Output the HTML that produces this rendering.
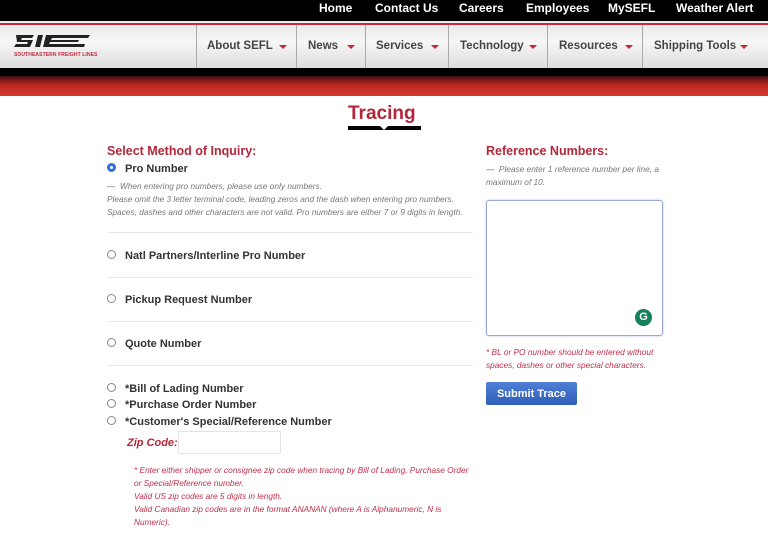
<!DOCTYPE html>
<html><head><meta charset="utf-8"><style>
*{margin:0;padding:0;box-sizing:border-box}
body{width:768px;height:543px;overflow:hidden;background:#fff;font-family:"Liberation Sans",Arial,sans-serif;position:relative}
.a{position:absolute;white-space:nowrap}
.top{left:0;top:0;width:768px;height:21px;background:#000}
.top span{position:absolute;top:1px;color:#fff;font-weight:bold;font-size:12px}
.nav{left:0;top:25px;width:768px;height:43px;background:linear-gradient(#e9e9e9,#f7f7f7 40%,#dcdcdc)}
.nav span{position:absolute;top:15px;font-size:11.5px;font-weight:bold;color:#444}
.nav i{position:absolute;top:20px;width:0;height:0;border-left:4px solid transparent;border-right:4px solid transparent;border-top:4px solid #c4283a}
.sep{position:absolute;top:0;width:1px;height:43px;background:#aaa}
.h{color:#b5263a;font-weight:bold;font-size:12.5px}
.lbl{color:#333;font-weight:bold;font-size:11px}
.n{color:#777;font-style:italic;font-size:8.3px}
.r{color:#c0304a;font-style:italic;font-size:8.3px}
.rad{position:absolute;width:9px;height:9px;border:1px solid #888;border-radius:50%;background:#fff}
.hr{position:absolute;left:107px;width:366px;height:1px;background:#e8e8e8}
</style></head><body>
<div class="a top">
<span style="left:319px">Home</span><span style="left:375px">Contact Us</span><span style="left:459px">Careers</span><span style="left:526px">Employees</span><span style="left:608px">MySEFL</span><span style="left:676px">Weather Alert</span>
</div>
<div class="a" style="left:0;top:21px;width:768px;height:2px;background:#eee"></div>
<div class="a" style="left:0;top:23px;width:768px;height:2px;background:#c4283a"></div>
<div class="a nav">
<svg style="position:absolute;left:14px;top:8px" width="78" height="16" viewBox="0 0 78 16"><path d="M2 2h18l-2 3H8l-1 2h12l-3 7H0l2-3h11l1-2H3z" fill="#222"/><path d="M24 2h5l-3 12h-5z" fill="#222"/><path d="M32 2h44l-2 3H38l-1 2h28l-1 2H36l-1 2h36l-1 3H29z" fill="#222"/></svg>
<div style="position:absolute;left:14px;top:27px;font-size:5px;color:#c4283a;font-weight:bold;letter-spacing:0.1px">SOUTHEASTERN FREIGHT LINES</div>
<div class="sep" style="left:196px"></div><div class="sep" style="left:296px"></div><div class="sep" style="left:365px"></div><div class="sep" style="left:448px"></div><div class="sep" style="left:547px"></div><div class="sep" style="left:642px"></div>
<span style="left:207px">About SEFL</span><i style="left:279px"></i>
<span style="left:308px">News</span><i style="left:347px"></i>
<span style="left:376px">Services</span><i style="left:431px"></i>
<span style="left:460px">Technology</span><i style="left:529px"></i>
<span style="left:559px">Resources</span><i style="left:625px"></i>
<span style="left:654px">Shipping Tools</span><i style="left:740px"></i>
</div>
<div class="a" style="left:0;top:68px;width:768px;height:8px;background:#000"></div>
<div class="a" style="left:0;top:76px;width:768px;height:20px;background:linear-gradient(#3a0d0d,#b8261f 40%,#d63a2e)"></div>
<div class="a" style="left:348px;top:103px;color:#b5263a;font-weight:bold;font-size:19px">Tracing</div>
<div class="a" style="left:348px;top:126px;width:73px;height:4px;background:#000"></div>
<div class="a" style="left:380px;top:126px;width:0;height:0;border-left:4px solid transparent;border-right:4px solid transparent;border-top:4px solid #fff"></div>

<div class="a h" style="left:107px;top:144px">Select Method of Inquiry:</div>
<div class="rad" style="left:107px;top:163px;border:3px solid #2f6fe0"></div>
<div class="a lbl" style="left:125px;top:163px">Pro Number</div>
<div class="a n" style="left:107px;top:181px">—&nbsp; When entering pro numbers, please use only numbers.</div>
<div class="a n" style="left:107px;top:194px">Please omit the 3 letter terminal code, leading zeros and the dash when entering pro numbers.</div>
<div class="a n" style="left:107px;top:207px">Spaces, dashes and other characters are not valid. Pro numbers are either 7 or 9 digits in length.</div>
<div class="hr" style="top:232px"></div>
<div class="rad" style="left:107px;top:250px"></div><div class="a lbl" style="left:125px;top:250px">Natl Partners/Interline Pro Number</div>
<div class="hr" style="top:277px"></div>
<div class="rad" style="left:107px;top:294px"></div><div class="a lbl" style="left:125px;top:294px">Pickup Request Number</div>
<div class="hr" style="top:321px"></div>
<div class="rad" style="left:107px;top:338px"></div><div class="a lbl" style="left:125px;top:338px">Quote Number</div>
<div class="hr" style="top:365px"></div>
<div class="rad" style="left:107px;top:383px"></div><div class="a lbl" style="left:125px;top:383px">*Bill of Lading Number</div>
<div class="rad" style="left:107px;top:399px"></div><div class="a lbl" style="left:125px;top:399px">*Purchase Order Number</div>
<div class="rad" style="left:107px;top:416px"></div><div class="a lbl" style="left:125px;top:416px">*Customer's Special/Reference Number</div>
<div class="a" style="left:127px;top:437px;color:#b5263a;font-weight:bold;font-style:italic;font-size:11px">Zip Code:</div>
<div class="a" style="left:178px;top:431px;width:103px;height:23px;border:1px solid #e4e4e4"></div>
<div class="a r" style="left:134px;top:465px">* Enter either shipper or consignee zip code when tracing by Bill of Lading, Purchase Order</div>
<div class="a r" style="left:134px;top:478px">or Special/Reference number.</div>
<div class="a r" style="left:134px;top:491px">Valid US zip codes are 5 digits in length.</div>
<div class="a r" style="left:134px;top:504px">Valid Canadian zip codes are in the format ANANAN (where A is Alphanumeric, N is</div>
<div class="a r" style="left:134px;top:517px">Numeric).</div>

<div class="a h" style="left:486px;top:144px">Reference Numbers:</div>
<div class="a n" style="left:486px;top:164px">—&nbsp; Please enter 1 reference number per line, a</div>
<div class="a n" style="left:486px;top:177px">maximum of 10.</div>
<div class="a" style="left:486px;top:200px;width:177px;height:136px;border:1px solid #9ba6d8;border-radius:3px;box-shadow:0 0 2px #b8c0e8"></div>
<div class="a" style="left:635px;top:309px;width:17px;height:17px;border-radius:50%;background:#15805a;color:#fff;font-size:11px;font-weight:bold;text-align:center;line-height:17px">G</div>
<div class="a r" style="left:486px;top:347px">* BL or PO number should be entered without</div>
<div class="a r" style="left:486px;top:360px">spaces, dashes or other special characters.</div>
<div class="a" style="left:486px;top:382px;width:91px;height:23px;border-radius:2px;background:linear-gradient(#4f7fd6,#2f5db8);color:#fff;font-weight:bold;font-size:11px;text-align:center;line-height:24px">Submit Trace</div>
</body></html>
